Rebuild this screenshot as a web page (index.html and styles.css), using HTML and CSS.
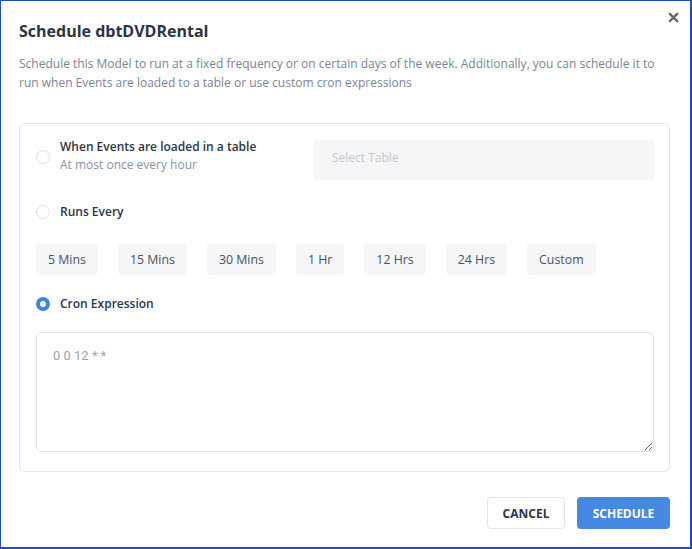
FILE: index.html
```html
<!DOCTYPE html>
<html lang="en">
<head>
<meta charset="utf-8">
<title>Schedule dbtDVDRental</title>
<link rel="stylesheet" href="styles.css">
</head>
<body>
<div class="modal">
  <div class="header">
    <h1 class="title">Schedule dbtDVDRental</h1>
    <button class="close" aria-label="Close">
      <svg width="11" height="11" viewBox="0 0 10 10"><path d="M1 1L9 9M9 1L1 9" stroke="#5f6570" stroke-width="2" stroke-linecap="butt"/></svg>
    </button>
  </div>
  <p class="desc">Schedule this Model to run at a fixed frequency or on certain days of the week. Additionally, you can schedule it to run when Events are loaded to a table or use custom cron expressions</p>

  <div class="card">
    <div class="row-events">
      <label class="option option-events">
        <span class="radio radio-top"></span>
        <span class="opt-text">
          <span class="opt-title">When Events are loaded in a table</span>
          <span class="opt-sub">At most once every hour</span>
        </span>
      </label>
      <div class="select">Select Table</div>
    </div>

    <label class="option option-runs">
      <span class="radio"></span>
      <span class="opt-title">Runs Every</span>
    </label>

    <div class="chips">
      <span class="chip">5 Mins</span>
      <span class="chip">15 Mins</span>
      <span class="chip">30 Mins</span>
      <span class="chip">1 Hr</span>
      <span class="chip">12 Hrs</span>
      <span class="chip">24 Hrs</span>
      <span class="chip">Custom</span>
    </div>

    <label class="option option-cron">
      <span class="radio radio-on"></span>
      <span class="opt-title">Cron Expression</span>
    </label>

    <textarea class="cron" placeholder="0 0 12 * *"></textarea>
  </div>

  <div class="footer">
    <button class="btn btn-cancel">CANCEL</button>
    <button class="btn btn-primary">SCHEDULE</button>
  </div>
</div>
</body>
</html>
```

FILE: styles.css
```css
* { box-sizing: border-box; }
html, body { margin: 0; padding: 0; background: #fff; }
body { font-family: "Open Sans", "Noto Sans", sans-serif; }

.modal {
  position: relative;
  width: 692px;
  height: 549px;
  border: 1px solid #1d4fb4;
  border-right-width: 2px;
  border-bottom-width: 2px;
  padding: 19px 20px 0 18px;
  background: #fff;
}

.header { display: flex; }
.title {
  margin: 0;
  font-size: 16px;
  line-height: 22px;
  font-weight: 700;
  color: #2c3444;
}
.close {
  position: absolute;
  top: 10px;
  right: 11px;
  width: 12px;
  height: 12px;
  padding: 0;
  border: 0;
  background: none;
  display: flex;
  align-items: center;
  justify-content: center;
}

.desc {
  margin: 12px 0 0;
  font-size: 12px;
  line-height: 19px;
  color: #7b8494;
}

.card {
  margin-top: 31px;
  border: 1px solid #e3e5ea;
  border-radius: 6px;
  padding: 16px 15px 19px 16px;
}

.row-events {
  display: flex;
  align-items: flex-start;
  justify-content: space-between;
}
.option {
  display: flex;
  align-items: center;
  gap: 10px;
}
.option-events { align-items: flex-start; margin-top: -2px; }
.radio {
  flex: none;
  width: 14px;
  height: 14px;
  border: 1.5px solid #dfe2e8;
  border-radius: 50%;
  background: #fff;
}
.radio-top { margin-top: 12px; }
.radio-on {
  border: 4.5px solid #3f84e2;
  background: #fff;
}
.opt-text { display: flex; flex-direction: column; }
.opt-title {
  font-size: 12px;
  line-height: 18px;
  font-weight: 600;
  color: #2d3646;
}
.opt-sub {
  font-size: 12px;
  line-height: 18px;
  color: #8b93a2;
}
.select {
  width: 340px;
  height: 40px;
  border-radius: 4px;
  background: #f4f5f7;
  padding-left: 18px;
  font-size: 12px;
  line-height: 36px;
  color: #c4c8cf;
}

.option-runs { margin-top: 23px; }
.chips {
  display: flex;
  gap: 20px;
  margin-top: 22px;
}
.chip {
  height: 32px;
  padding: 0 12px;
  border-radius: 4px;
  background: #f5f6f8;
  font-size: 12.35px;
  line-height: 33px;
  color: #4a5262;
}
.option-cron { margin-top: 20px; }

.cron {
  display: block;
  width: 100%;
  height: 120px;
  margin-top: 19px;
  border: 1px solid #e2e4e9;
  border-radius: 5px;
  padding: 14px 16px;
  font-family: Roboto, "Liberation Sans", sans-serif;
  font-size: 13px;
  line-height: 18px;
  color: #555;
  resize: vertical;
  outline: none;
}
.cron::placeholder { color: #9fa3ab; }

.footer {
  display: flex;
  justify-content: flex-end;
  gap: 12px;
  margin-top: 25px;
}
.btn {
  height: 32px;
  border-radius: 4px;
  font-family: "Open Sans", "Noto Sans", sans-serif;
  font-size: 12px;
  font-weight: 700;
  cursor: pointer;
}
.btn-cancel {
  width: 78px;
  border: 1px solid #e2e4e9;
  background: #fff;
  color: #2d3646;
}
.btn-primary {
  width: 93px;
  border: 0;
  background: #4589e2;
  color: #fff;
}
```
